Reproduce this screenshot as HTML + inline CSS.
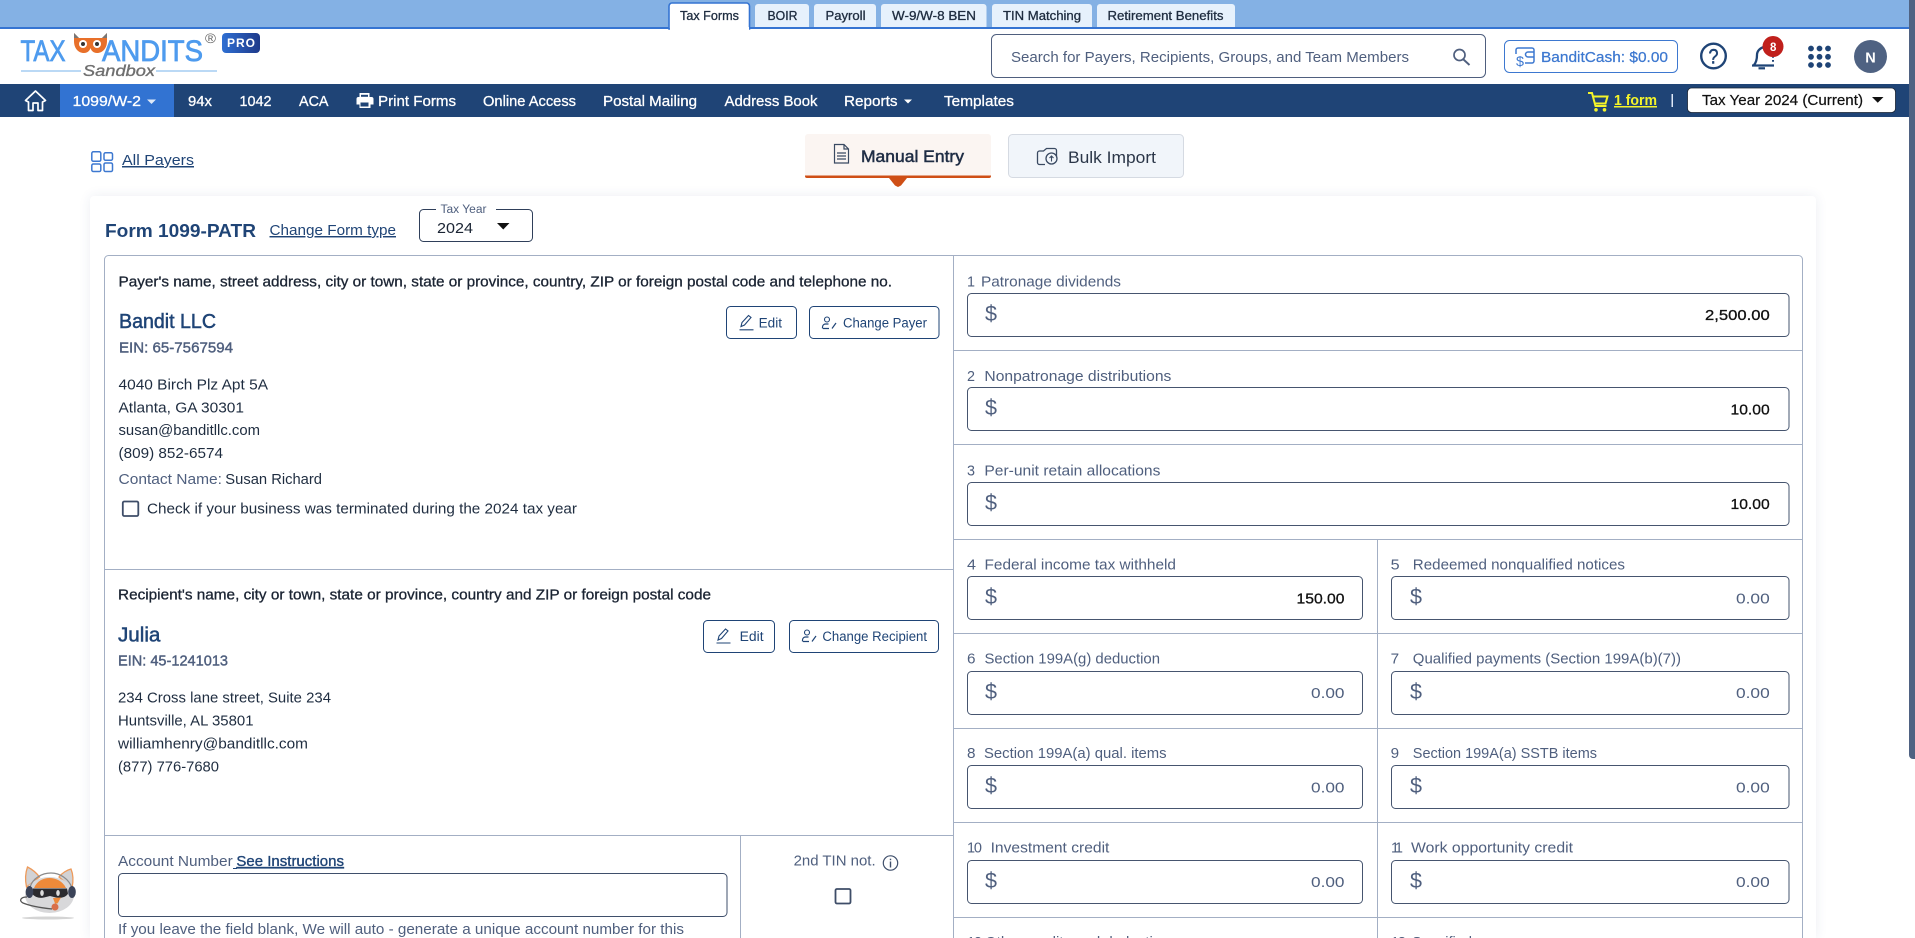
<!DOCTYPE html>
<html lang="en">
<head>
<meta charset="utf-8">
<title>Form 1099-PATR</title>
<style>
html,body{margin:0;padding:0;width:1915px;height:938px;overflow:hidden;background:#fff}
#wrap{position:absolute;left:0;top:0;width:1915px;height:938px;overflow:hidden}
#card{position:absolute;left:90px;top:196px;width:1726px;height:742px;background:#fff;box-shadow:0 0 12px rgba(40,70,120,.09);border-radius:4px 4px 0 0}
svg{position:absolute;left:0;top:0;display:block}
text{font-family:"Liberation Sans",sans-serif;font-size:14.5px;fill:#1f2d40}
.n{fill:#1f4476}
.g{fill:#4f5f7e}
.w{fill:#fff}
.l{fill:#1f4476;text-decoration:underline}
</style>
</head>
<body>
<div id="wrap">
<div id="card"></div>
<svg width="1915" height="938" viewBox="0 0 1915 938" xmlns="http://www.w3.org/2000/svg">
<!-- top bar -->
<rect x="0" y="0" width="1915" height="27" fill="#84b1e4"/>
<rect x="0" y="27" width="1915" height="2" fill="#3574d2"/>
<path d="M755 27V7a3 3 0 0 1 3-3h48a3 3 0 0 1 3 3v20z" fill="#e6f1fc"/>
<path d="M814 27V7a3 3 0 0 1 3-3h56a3 3 0 0 1 3 3v20z" fill="#e6f1fc"/>
<path d="M881 27V7a3 3 0 0 1 3-3h99.500a3 3 0 0 1 3 3v20z" fill="#e6f1fc"/>
<path d="M992 27V7a3 3 0 0 1 3-3h94a3 3 0 0 1 3 3v20z" fill="#e6f1fc"/>
<path d="M1097 27V7a3 3 0 0 1 3-3h132a3 3 0 0 1 3 3v20z" fill="#e6f1fc"/>
<path d="M669 29V6a3 3 0 0 1 3-3h74.500a3 3 0 0 1 3 3v23z" fill="#fff" stroke="#3574d2" stroke-width="1.600"/>
<rect x="670" y="27" width="79" height="3" fill="#fff"/>
<g style="stroke:#1f2d40;stroke-width:.3">
<text x="680" y="20" textLength="59" lengthAdjust="spacingAndGlyphs" style="font-size:12.500px">Tax Forms</text>
<text x="767.500" y="20" textLength="30" lengthAdjust="spacingAndGlyphs" style="font-size:12.500px">BOIR</text>
<text x="825.500" y="20" textLength="40" lengthAdjust="spacingAndGlyphs" style="font-size:12.500px">Payroll</text>
<text x="892" y="20" textLength="84" lengthAdjust="spacingAndGlyphs" style="font-size:12.500px">W-9/W-8 BEN</text>
<text x="1003" y="20" textLength="78" lengthAdjust="spacingAndGlyphs" style="font-size:12.500px">TIN Matching</text>
<text x="1107.500" y="20" textLength="116" lengthAdjust="spacingAndGlyphs" style="font-size:12.500px">Retirement Benefits</text>
</g>

<!-- logo -->
<g style="stroke:#4e9bee;stroke-width:.8">
<text x="20.500" y="61" textLength="45" lengthAdjust="spacingAndGlyphs" style="font-size:30px;fill:#4e9bee">TAX</text>
<text x="102" y="61" textLength="101" lengthAdjust="spacingAndGlyphs" style="font-size:30px;fill:#4e9bee">ANDITS</text>
</g>
<path d="M74 33l5 5h23l5-5v8c0 7-4 12-10 12-4 0-6-3-6.500-5-.5 2-2.500 5-6.500 5-6 0-10-5-10-12z" fill="#e8702a"/>
<path d="M74 33l5 5h-5zM107 33l-5 5h5z" fill="#777"/>
<circle cx="83" cy="44" r="4" fill="#fff"/><circle cx="83" cy="44" r="2" fill="#333"/>
<circle cx="97" cy="44" r="4" fill="#fff"/><circle cx="97" cy="44" r="2" fill="#333"/>
<text x="205" y="43" textLength="11" lengthAdjust="spacingAndGlyphs" style="font-size:14px;fill:#666">®</text>
<defs><linearGradient id="pro" x1="0" x2="1"><stop offset="0" stop-color="#2f6fd3"/><stop offset="1" stop-color="#1e3a8a"/></linearGradient></defs>
<rect x="222" y="33" width="38" height="20" rx="4" fill="url(#pro)"/>
<text x="227" y="47" textLength="28" style="font-size:12px;font-weight:bold;fill:#fff">PRO</text>
<rect x="21" y="70" width="60" height="2" fill="#bbd9f5"/>
<rect x="156" y="70" width="61" height="2" fill="#bbd9f5"/>
<text x="83" y="76" textLength="72" lengthAdjust="spacingAndGlyphs" style="font-size:16px;font-style:italic;fill:#6f6f6f;stroke:#6f6f6f;stroke-width:.35">Sandbox</text>

<!-- search -->
<rect x="991.500" y="34.500" width="494" height="43" rx="5" fill="#fff" stroke="#4f5f7e"/>
<text x="1011" y="62" textLength="398" lengthAdjust="spacingAndGlyphs" style="font-size:15px;fill:#4f5f7e">Search for Payers, Recipients, Groups, and Team Members</text>
<circle cx="1459.500" cy="55" r="5.500" fill="none" stroke="#4f5f7e" stroke-width="1.700"/>
<path d="M1463.500 59.500l6 5.500" stroke="#4f5f7e" stroke-width="1.900" fill="none"/>

<!-- bandit cash -->
<rect x="1504.500" y="40.500" width="173" height="32" rx="5" fill="#fff" stroke="#3d78d0"/>
<path d="M1516 54v-4a2 2 0 0 1 2-2h14a2 2 0 0 1 2 2v11a2 2 0 0 1-2 2h-7M1534 52h-6a2.500 2.500 0 0 0 0 5h6" fill="none" stroke="#3d78d0" stroke-width="1.500"/>
<text x="1516" y="66" textLength="8" lengthAdjust="spacingAndGlyphs" style="font-size:14px;fill:#3d78d0">$</text>
<text x="1541" y="62" textLength="127" lengthAdjust="spacingAndGlyphs" style="font-size:15px;fill:#3d78d0;stroke:#3d78d0;stroke-width:.25">BanditCash: $0.00</text>

<!-- help -->
<circle cx="1713.500" cy="56" r="12.300" fill="none" stroke="#1f4476" stroke-width="2.400"/>
<text x="1708.500" y="63.500" textLength="10" lengthAdjust="spacingAndGlyphs" style="font-size:21px;fill:#1f4476;stroke:#1f4476;stroke-width:.5">?</text>
<!-- bell -->
<path d="M1752 65.500h22M1754 65c2.500-3 3-6 3-10 0-4 3-7 7-8" fill="none" stroke="#1f4476" stroke-width="2.300"/>
<path d="M1758.500 68.300h6.500" stroke="#1f4476" stroke-width="2.200"/>
<path d="M1773 56v1.800M1773 60v1.800" stroke="#1f4476" stroke-width="2"/>
<circle cx="1773" cy="46.500" r="10.500" fill="#c0201c"/>
<text x="1770" y="51" textLength="6.500" style="font-size:11.500px;font-weight:bold;fill:#fff">8</text>
<!-- grid -->
<g fill="#1f4476">
<circle cx="1811" cy="48.500" r="2.900"/><circle cx="1819.500" cy="48.500" r="2.900"/><circle cx="1828" cy="48.500" r="2.900"/>
<circle cx="1811" cy="56.800" r="2.900"/><circle cx="1819.500" cy="56.800" r="2.900"/><circle cx="1828" cy="56.800" r="2.900"/>
<circle cx="1811" cy="65" r="2.900"/><circle cx="1819.500" cy="65" r="2.900"/><circle cx="1828" cy="65" r="2.900"/>
</g>
<circle cx="1870.500" cy="56.500" r="16.500" fill="#4f6282"/>
<text x="1865.300" y="62.300" textLength="10.500" lengthAdjust="spacingAndGlyphs" style="font-size:15px;font-weight:bold;fill:#fff">N</text>

<!-- nav -->
<rect x="0" y="84" width="1915" height="33" fill="#1f4476"/>
<rect x="60" y="84" width="114" height="33" fill="#3273d2"/>
<path d="M35.500 91L25.500 100.500l3 1.500v8.500H33v-7.500h5v7.500h4.500V102l3-1.500z" fill="none" stroke="#fff" stroke-width="1.700" stroke-linejoin="round"/>
<g style="stroke:#fff;stroke-width:.3">
<text x="72.500" y="106" textLength="68.500" lengthAdjust="spacingAndGlyphs" class="w" style="font-size:15px">1099/W-2</text>
<text x="188" y="106" textLength="24" lengthAdjust="spacingAndGlyphs" class="w" style="font-size:15px">94x</text>
<text x="239.500" y="106" textLength="32" lengthAdjust="spacingAndGlyphs" class="w" style="font-size:15px">1042</text>
<text x="299" y="106" textLength="29.500" lengthAdjust="spacingAndGlyphs" class="w" style="font-size:15px">ACA</text>
<text x="378" y="106" textLength="78" lengthAdjust="spacingAndGlyphs" class="w" style="font-size:15px">Print Forms</text>
<text x="483" y="106" textLength="93" lengthAdjust="spacingAndGlyphs" class="w" style="font-size:15px">Online Access</text>
<text x="603" y="106" textLength="94" lengthAdjust="spacingAndGlyphs" class="w" style="font-size:15px">Postal Mailing</text>
<text x="724.500" y="106" textLength="93" lengthAdjust="spacingAndGlyphs" class="w" style="font-size:15px">Address Book</text>
<text x="844" y="106" textLength="53.500" lengthAdjust="spacingAndGlyphs" class="w" style="font-size:15px">Reports</text>
<text x="944" y="106" textLength="70" lengthAdjust="spacingAndGlyphs" class="w" style="font-size:15px">Templates</text>
</g>
<path d="M147 99.500h9l-4.500 4.500z" fill="#dfe9f8"/>
<path d="M904 99.500h8l-4 4z" fill="#fff"/>
<path d="M359.500 97v-4h10v4h2a2 2 0 0 1 2 2v5.500h-3v3.500h-11v-3.500h-3V99a2 2 0 0 1 2-2z" fill="#fff"/>
<rect x="360.500" y="102.500" width="8" height="4" fill="#1f4476"/>
<rect x="361" y="94.800" width="7" height="2" fill="#1f4476"/>

<!-- cart -->
<path d="M1588 93h4l3.500 13h11M1593 96.500h14.500l-2 7h-10.500" fill="none" stroke="#f4f42a" stroke-width="2"/>
<circle cx="1596" cy="109.800" r="1.800" fill="#f4f42a"/><circle cx="1604.500" cy="109.800" r="1.800" fill="#f4f42a"/>
<text x="1614" y="105" textLength="43" lengthAdjust="spacingAndGlyphs" style="font-size:15px;fill:#f4f42a;font-weight:bold;text-decoration:underline">1 form</text>
<rect x="1671.500" y="94" width="1.500" height="13" fill="#dfe9f8"/>
<rect x="1687.500" y="88" width="208" height="24.500" rx="4" fill="#fff" stroke="#1a2433" stroke-width=".8"/>
<text x="1702" y="105" textLength="161" lengthAdjust="spacingAndGlyphs" style="font-size:15px;fill:#111;stroke:#111;stroke-width:.2">Tax Year 2024 (Current)</text>
<path d="M1872 97h11.500l-5.750 5.800z" fill="#111"/>

<!-- all payers -->
<g fill="none" stroke="#3d78d0" stroke-width="1.500">
<rect x="91.800" y="151.800" width="9" height="9.500" rx="1.500"/>
<rect x="104" y="152.800" width="8.500" height="7.500" rx="1.500"/>
<rect x="91.800" y="164" width="9" height="7.500" rx="1.500"/>
<rect x="104" y="163" width="8.500" height="8.500" rx="1.500"/>
</g>
<text x="122" y="165" textLength="72" lengthAdjust="spacingAndGlyphs" class="l" style="font-size:15px">All Payers</text>

<!-- tabs -->
<path d="M805 137a3 3 0 0 1 3-3h180a3 3 0 0 1 3 3v41H805z" fill="#fbf5f2"/>
<path d="M805 175.500h186V176a2 2 0 0 1-2 2H807a2 2 0 0 1-2-2z" fill="#cf4f16"/>
<path d="M889 178h18l-6 7.500-3 1.500-3-1.500z" fill="#cf4f16"/>
<path d="M834.500 144.500h9.500l4.500 4.500v14h-14zM844 144.500v4.500h4.500" fill="none" stroke="#3a4a62" stroke-width="1.200"/>
<path d="M837 153h9M837 156h9M837 159h9" stroke="#3a4a62" stroke-width="1.200"/>
<text x="861" y="162" textLength="103" lengthAdjust="spacingAndGlyphs" style="font-size:17px;fill:#1f2d45;stroke:#1f2d45;stroke-width:.5">Manual Entry</text>
<rect x="1008.500" y="134.500" width="175" height="43" rx="4" fill="#f1f5fa" stroke="#d5dae2"/>
<path d="M1045 164.500h-5.500a2 2 0 0 1-2-2V153a2 2 0 0 1 2-2h4l3-2.500h8a2 2 0 0 1 2 2V156" fill="none" stroke="#3a4a62" stroke-width="1.300"/>
<circle cx="1051.500" cy="158.500" r="5.500" fill="#f1f5fa" stroke="#3a4a62" stroke-width="1.300"/>
<path d="M1051.500 161.500v-5.500M1049.500 158l2-2 2 2" fill="none" stroke="#3a4a62" stroke-width="1.100"/>
<text x="1068" y="163" textLength="88" lengthAdjust="spacingAndGlyphs" style="font-size:17px;fill:#2b3648">Bulk Import</text>

<!-- form header -->
<text x="105" y="237" textLength="151" lengthAdjust="spacingAndGlyphs" style="font-size:18px;fill:#1f4476;font-weight:bold">Form 1099-PATR</text>
<text x="269.500" y="235" textLength="126.500" lengthAdjust="spacingAndGlyphs" class="l" style="font-size:14.500px">Change Form type</text>
<rect x="419.500" y="209.500" width="113" height="32" rx="4" fill="#fff" stroke="#2f3f5a"/>
<rect x="436" y="205" width="60" height="8" fill="#fff"/>
<text x="440.500" y="212.800" textLength="46" lengthAdjust="spacingAndGlyphs" style="font-size:11.500px;fill:#4f5f7e">Tax Year</text>
<text x="437" y="232.800" textLength="36" lengthAdjust="spacingAndGlyphs" style="font-size:15px;fill:#1a2433">2024</text>
<path d="M497 223h12.500l-6.250 6.500z" fill="#111"/>

<!-- form table lines -->
<path d="M104.500 938V259.500a4 4 0 0 1 4-4H1798.500a4 4 0 0 1 4 4V938" fill="#fff" stroke="#a3afc4"/>
<rect x="953" y="255" width="1" height="683" fill="#a3afc4"/>
<rect x="104" y="569" width="849" height="1" fill="#a3afc4"/>
<rect x="104" y="835" width="849" height="1" fill="#a3afc4"/>
<rect x="740" y="835" width="1" height="103" fill="#a3afc4"/>
<rect x="953" y="350" width="850" height="1" fill="#a3afc4"/>
<rect x="953" y="444" width="850" height="1" fill="#a3afc4"/>
<rect x="953" y="539" width="850" height="1" fill="#a3afc4"/>
<rect x="953" y="633" width="850" height="1" fill="#a3afc4"/>
<rect x="953" y="728" width="850" height="1" fill="#a3afc4"/>
<rect x="953" y="822" width="850" height="1" fill="#a3afc4"/>
<rect x="953" y="917" width="850" height="1" fill="#a3afc4"/>
<rect x="1377" y="539" width="1" height="399" fill="#a3afc4"/>

<!-- payer -->
<text x="118.500" y="286.700" textLength="773.500" lengthAdjust="spacingAndGlyphs" style="font-size:14.500px;fill:#1b2433;stroke:#1b2433;stroke-width:.3">Payer's name, street address, city or town, state or province, country, ZIP or foreign postal code and telephone no.</text>
<text x="119" y="328" textLength="97" lengthAdjust="spacingAndGlyphs" style="font-size:20px;fill:#1f4476;stroke:#1f4476;stroke-width:.5">Bandit LLC</text>
<text x="119" y="352.700" textLength="114" lengthAdjust="spacingAndGlyphs" style="font-size:14.500px;fill:#4f5f7e;stroke:#4f5f7e;stroke-width:.4">EIN: 65-7567594</text>
<text x="118.500" y="389.300" textLength="149.500" lengthAdjust="spacingAndGlyphs">4040 Birch Plz Apt 5A</text>
<text x="118.500" y="412.300" textLength="125.500" lengthAdjust="spacingAndGlyphs">Atlanta, GA 30301</text>
<text x="118.500" y="435" textLength="141.500" lengthAdjust="spacingAndGlyphs">susan@banditllc.com</text>
<text x="118.500" y="458" textLength="104.500" lengthAdjust="spacingAndGlyphs">(809) 852-6574</text>
<text x="118.500" y="484" textLength="103.500" lengthAdjust="spacingAndGlyphs" class="g">Contact Name:</text>
<text x="225.300" y="484" textLength="96.700" lengthAdjust="spacingAndGlyphs">Susan Richard</text>
<rect x="122.800" y="501.500" width="15.500" height="14.500" rx="1.500" fill="#fff" stroke="#3e4d68" stroke-width="1.800"/>
<text x="147" y="513.300" textLength="430" lengthAdjust="spacingAndGlyphs">Check if your business was terminated during the 2024 tax year</text>

<rect x="726.500" y="306.500" width="70" height="32" rx="4" fill="#fff" stroke="#1f4476"/>
<path d="M741 326.500l1-4 6.500-7 2.500 2-6.500 7.500zM739.500 329.800h14" fill="none" stroke="#1f4476" stroke-width="1.100"/>
<text x="758.600" y="327.300" textLength="23.400" lengthAdjust="spacingAndGlyphs" style="font-size:13.500px;fill:#1f4476">Edit</text>
<rect x="809.500" y="306.500" width="129.500" height="32" rx="4" fill="#fff" stroke="#1f4476"/>
<circle cx="827" cy="319.500" r="2.500" fill="none" stroke="#1f4476" stroke-width="1.100"/>
<path d="M822.500 328.500v-1.500a3 3 0 0 1 3-3h3M832 328.500l4-5.500M823 328.500h6" fill="none" stroke="#1f4476" stroke-width="1.200"/>
<text x="843" y="327.300" textLength="84" lengthAdjust="spacingAndGlyphs" style="font-size:13.500px;fill:#1f4476">Change Payer</text>

<!-- recipient -->
<text x="118" y="599.300" textLength="593" lengthAdjust="spacingAndGlyphs" style="font-size:14.500px;fill:#1b2433;stroke:#1b2433;stroke-width:.3">Recipient's name, city or town, state or province, country and ZIP or foreign postal code</text>
<text x="118" y="641.700" textLength="42.400" lengthAdjust="spacingAndGlyphs" style="font-size:20px;fill:#1f4476;stroke:#1f4476;stroke-width:.5">Julia</text>
<text x="118" y="665.300" textLength="110" lengthAdjust="spacingAndGlyphs" style="font-size:14.500px;fill:#4f5f7e;stroke:#4f5f7e;stroke-width:.4">EIN: 45-1241013</text>
<text x="118" y="702.700" textLength="213" lengthAdjust="spacingAndGlyphs">234 Cross lane street, Suite 234</text>
<text x="118" y="725.700" textLength="135.500" lengthAdjust="spacingAndGlyphs">Huntsville, AL 35801</text>
<text x="118" y="748.700" textLength="190" lengthAdjust="spacingAndGlyphs">williamhenry@banditllc.com</text>
<text x="118" y="771.300" textLength="101" lengthAdjust="spacingAndGlyphs">(877) 776-7680</text>
<rect x="703.500" y="620.500" width="71" height="32" rx="4" fill="#fff" stroke="#1f4476"/>
<path d="M718 640l1-4 6.500-7 2.500 2-6.500 7.500zM716.500 643h14" fill="none" stroke="#1f4476" stroke-width="1.100"/>
<text x="739.700" y="641" textLength="23.900" lengthAdjust="spacingAndGlyphs" style="font-size:13.500px;fill:#1f4476">Edit</text>
<rect x="789.500" y="620.500" width="149" height="32" rx="4" fill="#fff" stroke="#1f4476"/>
<circle cx="807" cy="632.500" r="2.500" fill="none" stroke="#1f4476" stroke-width="1.100"/>
<path d="M802.500 641.500v-1.500a3 3 0 0 1 3-3h3M812 641.500l4-5.500M803 641.500h6" fill="none" stroke="#1f4476" stroke-width="1.200"/>
<text x="822.400" y="641" textLength="104.600" lengthAdjust="spacingAndGlyphs" style="font-size:13.500px;fill:#1f4476">Change Recipient</text>

<!-- account -->
<text x="118" y="866" textLength="114.700" lengthAdjust="spacingAndGlyphs" class="g">Account Number</text>
<rect x="233" y="868" width="4" height="1" fill="#1f4476"/>
<text x="236.400" y="866" textLength="107.600" lengthAdjust="spacingAndGlyphs" class="l" style="stroke:#1f4476;stroke-width:.35">See Instructions</text>
<rect x="118.500" y="873.500" width="608.500" height="43" rx="4" fill="#fff" stroke="#3f4f6b"/>
<text x="118" y="934" textLength="566" lengthAdjust="spacingAndGlyphs" class="g">If you leave the field blank, We will auto - generate a unique account number for this</text>
<text x="793.600" y="865.500" textLength="82" lengthAdjust="spacingAndGlyphs" class="g">2nd TIN not.</text>
<circle cx="890.500" cy="863" r="7.200" fill="none" stroke="#3f4f6b" stroke-width="1.200"/>
<rect x="889.800" y="861.500" width="1.400" height="6" fill="#3f4f6b"/><rect x="889.800" y="858.700" width="1.400" height="1.500" fill="#3f4f6b"/>
<rect x="835.500" y="889" width="15" height="14.500" rx="1.500" fill="#fff" stroke="#3e4d68" stroke-width="1.800"/>

<!-- right labels -->
<g>
<text x="967" y="286.700" textLength="8" lengthAdjust="spacingAndGlyphs" class="g">1</text>
<text x="981" y="286.700" textLength="140" lengthAdjust="spacingAndGlyphs" class="g">Patronage dividends</text>
<text x="967" y="381" textLength="8" lengthAdjust="spacingAndGlyphs" class="g">2</text>
<text x="984.400" y="381" textLength="187" lengthAdjust="spacingAndGlyphs" class="g">Nonpatronage distributions</text>
<text x="967" y="475.300" textLength="8" lengthAdjust="spacingAndGlyphs" class="g">3</text>
<text x="984.400" y="475.300" textLength="176" lengthAdjust="spacingAndGlyphs" class="g">Per-unit retain allocations</text>
<text x="967" y="569.300" textLength="9" lengthAdjust="spacingAndGlyphs" class="g">4</text>
<text x="984.500" y="569.300" textLength="191.500" lengthAdjust="spacingAndGlyphs" class="g">Federal income tax withheld</text>
<text x="1390.600" y="569.300" textLength="9" lengthAdjust="spacingAndGlyphs" class="g">5</text>
<text x="1412.800" y="569.300" textLength="212.200" lengthAdjust="spacingAndGlyphs" class="g">Redeemed nonqualified notices</text>
<text x="967" y="663.300" textLength="8.500" lengthAdjust="spacingAndGlyphs" class="g">6</text>
<text x="984.500" y="663.300" textLength="175.500" lengthAdjust="spacingAndGlyphs" class="g">Section 199A(g) deduction</text>
<text x="1390.600" y="663.300" textLength="8.500" lengthAdjust="spacingAndGlyphs" class="g">7</text>
<text x="1412.800" y="663.300" textLength="268.200" lengthAdjust="spacingAndGlyphs" class="g">Qualified payments (Section 199A(b)(7))</text>
<text x="967" y="758" textLength="8.500" lengthAdjust="spacingAndGlyphs" class="g">8</text>
<text x="984" y="758" textLength="182.600" lengthAdjust="spacingAndGlyphs" class="g">Section 199A(a) qual. items</text>
<text x="1390.600" y="758" textLength="8.500" lengthAdjust="spacingAndGlyphs" class="g">9</text>
<text x="1412.800" y="758" textLength="184.200" lengthAdjust="spacingAndGlyphs" class="g">Section 199A(a) SSTB items</text>
<text x="967" y="852.700" textLength="15" class="g">10</text>
<text x="990.600" y="852.700" textLength="118.800" lengthAdjust="spacingAndGlyphs" class="g">Investment credit</text>
<text x="1391" y="852.700" textLength="12" class="g">11</text>
<text x="1411" y="852.700" textLength="162" lengthAdjust="spacingAndGlyphs" class="g">Work opportunity credit</text>
<text x="967" y="947" textLength="15" class="g">12</text>
<text x="985" y="947" textLength="192" lengthAdjust="spacingAndGlyphs" class="g">Other credits and deductions</text>
<text x="1391" y="947" textLength="15" class="g">13</text>
<text x="1412" y="947" textLength="60" lengthAdjust="spacingAndGlyphs" class="g">Specified</text>
</g>

<!-- inputs -->
<g fill="#fff" stroke="#46556f">
<rect x="967.500" y="293.500" width="821.500" height="43" rx="4"/>
<rect x="967.500" y="387.500" width="821.500" height="43" rx="4"/>
<rect x="967.500" y="482.500" width="821.500" height="43" rx="4"/>
<rect x="967.500" y="576.500" width="395" height="43" rx="4"/>
<rect x="1391.500" y="576.500" width="397.500" height="43" rx="4"/>
<rect x="967.500" y="671.500" width="395" height="43" rx="4"/>
<rect x="1391.500" y="671.500" width="397.500" height="43" rx="4"/>
<rect x="967.500" y="765.500" width="395" height="43" rx="4"/>
<rect x="1391.500" y="765.500" width="397.500" height="43" rx="4"/>
<rect x="967.500" y="860.500" width="395" height="43" rx="4"/>
<rect x="1391.500" y="860.500" width="397.500" height="43" rx="4"/>
</g>

<!-- dollars -->
<g>
<text x="985" y="321" textLength="12" lengthAdjust="spacingAndGlyphs" class="g" style="font-size:22px">$</text>
<text x="985" y="415" textLength="12" lengthAdjust="spacingAndGlyphs" class="g" style="font-size:22px">$</text>
<text x="985" y="510" textLength="12" lengthAdjust="spacingAndGlyphs" class="g" style="font-size:22px">$</text>
<text x="985" y="604" textLength="12" lengthAdjust="spacingAndGlyphs" class="g" style="font-size:22px">$</text>
<text x="1410" y="604" textLength="12" lengthAdjust="spacingAndGlyphs" class="g" style="font-size:22px">$</text>
<text x="985" y="699" textLength="12" lengthAdjust="spacingAndGlyphs" class="g" style="font-size:22px">$</text>
<text x="1410" y="699" textLength="12" lengthAdjust="spacingAndGlyphs" class="g" style="font-size:22px">$</text>
<text x="985" y="793" textLength="12" lengthAdjust="spacingAndGlyphs" class="g" style="font-size:22px">$</text>
<text x="1410" y="793" textLength="12" lengthAdjust="spacingAndGlyphs" class="g" style="font-size:22px">$</text>
<text x="985" y="888" textLength="12" lengthAdjust="spacingAndGlyphs" class="g" style="font-size:22px">$</text>
<text x="1410" y="888" textLength="12" lengthAdjust="spacingAndGlyphs" class="g" style="font-size:22px">$</text>
</g>

<!-- values -->
<g style="stroke:#111;stroke-width:.3">
<text x="1705" y="320" textLength="64.700" lengthAdjust="spacingAndGlyphs" style="font-size:15px;fill:#111">2,500.00</text>
<text x="1730.500" y="414.500" textLength="39.200" lengthAdjust="spacingAndGlyphs" style="font-size:15px;fill:#111">10.00</text>
<text x="1730.500" y="509" textLength="39.200" lengthAdjust="spacingAndGlyphs" style="font-size:15px;fill:#111">10.00</text>
<text x="1296.500" y="603.500" textLength="48" lengthAdjust="spacingAndGlyphs" style="font-size:15px;fill:#111">150.00</text>
</g>
<text x="1736" y="603.500" textLength="33.700" lengthAdjust="spacingAndGlyphs" class="g" style="font-size:15px">0.00</text>
<text x="1311" y="698" textLength="33.500" lengthAdjust="spacingAndGlyphs" class="g" style="font-size:15px">0.00</text>
<text x="1736" y="698" textLength="33.700" lengthAdjust="spacingAndGlyphs" class="g" style="font-size:15px">0.00</text>
<text x="1311" y="792.500" textLength="33.500" lengthAdjust="spacingAndGlyphs" class="g" style="font-size:15px">0.00</text>
<text x="1736" y="792.500" textLength="33.700" lengthAdjust="spacingAndGlyphs" class="g" style="font-size:15px">0.00</text>
<text x="1311" y="887" textLength="33.500" lengthAdjust="spacingAndGlyphs" class="g" style="font-size:15px">0.00</text>
<text x="1736" y="887" textLength="33.700" lengthAdjust="spacingAndGlyphs" class="g" style="font-size:15px">0.00</text>

<!-- mascot -->
<ellipse cx="48" cy="918" rx="26" ry="1.500" fill="#d4d4d4"/>
<path d="M27.500 867c-2.500 7-2.500 13-1 20l13-10c-3-4-8-8-12-10zM71 869c2.500 6 2.500 12 1 19l-13-11c3-4 8-7 12-8z" fill="#d2d2d4" stroke="#ee9a5a" stroke-width="1.300"/>
<ellipse cx="49.500" cy="895" rx="24.500" ry="18" fill="#d8d8da"/>
<path d="M34 888c3-7 9-10 15.500-10s13 3 16.500 10z" fill="#ee8a3a"/>
<path d="M33 888.500h34l1 5c-2 4-8 5-12 4l-6-1.500-6 1.500c-4 1-9 0-12-4z" fill="#2b2b2f"/>
<ellipse cx="42" cy="893" rx="1.800" ry="3" fill="#ddd"/><ellipse cx="58" cy="893" rx="1.800" ry="3" fill="#ddd"/>
<path d="M53 898l8-.5-3.500 6h-2.500z" fill="#ee8a3a"/>
<ellipse cx="55" cy="907" rx="3.500" ry="3.500" fill="#d9704a"/>
<path d="M30 887c3-9 12-14 21-14 9 0 18 6 21 15" fill="none" stroke="#8a8a8a" stroke-width="1.200"/>
<ellipse cx="29.500" cy="892" rx="3.800" ry="6" fill="#3b4358"/><ellipse cx="72" cy="892" rx="3.800" ry="6" fill="#3b4358"/>
<path d="M27 897c-7 0-8 4-4 6 7 3 20 5 29 6" fill="none" stroke="#555" stroke-width="1.300"/>

<!-- scrollbar -->
<path d="M1909 0h6v759h-2a4 4 0 0 1-4-4z" fill="#4f6282"/>
</svg>
</div>
</body>
</html>
